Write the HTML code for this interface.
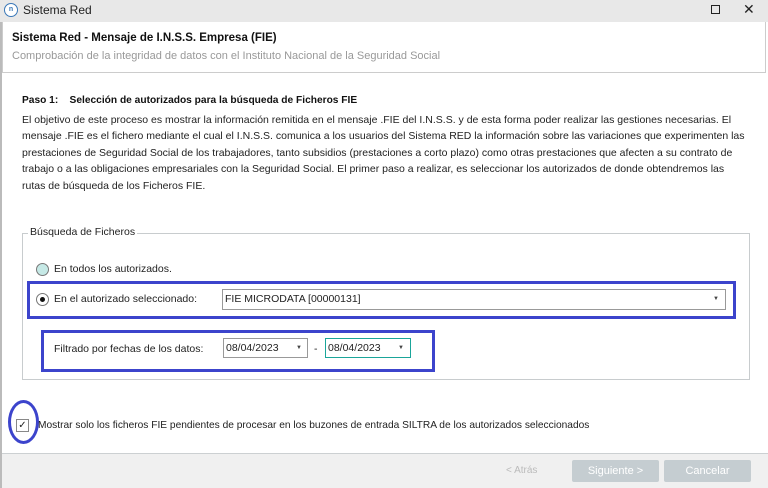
<!DOCTYPE html>
<html><head><meta charset="utf-8"><style>
*{margin:0;padding:0;box-sizing:border-box}
body{width:768px;height:488px;overflow:hidden;background:#fff;font-family:"Liberation Sans",sans-serif;font-size:11px;color:#222;position:relative}
.a{position:absolute;white-space:nowrap}
</style></head><body>
<div class="a" style="left:0;top:0;width:768px;height:22px;background:#e8e8e8"></div>
<div class="a" style="left:4px;top:3px;width:14px;height:14px;border-radius:50%;border:1.5px solid #3a78b8;background:#fff;font-size:7px;color:#3a78b8;text-align:center;line-height:11px;font-weight:bold">n</div>
<div class="a" style="left:23px;top:3px;font-size:12px;color:#222">Sistema Red</div>
<div class="a" style="left:711px;top:5px;width:9px;height:9px;border:1.3px solid #222"></div>
<div class="a" style="left:743px;top:1px;font-size:14px;color:#222">✕</div>
<div class="a" style="left:0;top:22px;width:768px;height:466px;border-left:2px solid #bbb"></div>
<div class="a" style="left:2px;top:22px;width:764px;height:51px;border:1px solid #ccc;border-top:none;background:#fff"></div>
<div class="a" style="left:12px;top:32px;font-weight:bold;font-size:11.5px;color:#111">Sistema Red - Mensaje de I.N.S.S. Empresa (FIE)</div>
<div class="a" style="left:12px;top:50px;font-size:11px;color:#999">Comprobación de la integridad de datos con el Instituto Nacional de la Seguridad Social</div>
<div class="a" style="left:22px;top:95px;font-weight:bold;font-size:10.2px;color:#111">Paso 1:&nbsp;&nbsp;&nbsp;&nbsp;Selección de autorizados para la búsqueda de Ficheros FIE</div>
<div class="a" style="left:22px;top:112px;font-size:10.5px;line-height:16.4px;color:#222;white-space:normal;width:730px">El objetivo de este proceso es mostrar la información remitida en el mensaje .FIE del I.N.S.S. y de esta forma poder realizar las gestiones necesarias. El<br>mensaje .FIE es el fichero mediante el cual el I.N.S.S. comunica a los usuarios del Sistema RED la información sobre las variaciones que experimenten las<br>prestaciones de Seguridad Social de los trabajadores, tanto subsidios (prestaciones a corto plazo) como otras prestaciones que afecten a su contrato de<br>trabajo o a las obligaciones empresariales con la Seguridad Social. El primer paso a realizar, es seleccionar los autorizados de donde obtendremos las<br>rutas de búsqueda de los Ficheros FIE.</div>
<div class="a" style="left:22px;top:233px;width:728px;height:147px;border:1px solid #c8ccce"></div>
<div class="a" style="left:28px;top:226px;background:#fff;padding:0 2px;font-size:10.5px">Búsqueda de Ficheros</div>
<div class="a" style="left:36px;top:263px;width:13px;height:13px;border-radius:50%;border:1px solid #777;background:#c6e9e6"></div>
<div class="a" style="left:54px;top:263px;font-size:10.5px">En todos los autorizados.</div>
<div class="a" style="left:27px;top:281px;width:709px;height:38px;border:3px solid #3c44cc"></div>
<div class="a" style="left:36px;top:293px;width:13px;height:13px;border-radius:50%;border:1px solid #777;background:#fff"><div style="position:absolute;left:3px;top:3px;width:5px;height:5px;border-radius:50%;background:#111"></div></div>
<div class="a" style="left:54px;top:293px;font-size:10.5px">En el autorizado seleccionado:</div>
<div class="a" style="left:222px;top:289px;width:504px;height:21px;border:1px solid #999;background:#fff;font-size:10.5px;padding:3px 0 0 2px">FIE MICRODATA [00000131]</div>
<div class="a" style="left:713px;top:296px;font-size:6px;color:#444">▼</div>
<div class="a" style="left:41px;top:330px;width:394px;height:42px;border:3px solid #3c44cc"></div>
<div class="a" style="left:54px;top:343px;font-size:10.5px">Filtrado por fechas de los datos:</div>
<div class="a" style="left:223px;top:338px;width:85px;height:20px;border:1px solid #999;font-size:10.5px;padding:3px 0 0 2px">08/04/2023</div>
<div class="a" style="left:296px;top:345px;font-size:6px;color:#444">▼</div>
<div class="a" style="left:314px;top:343px;font-size:10.5px">-</div>
<div class="a" style="left:325px;top:338px;width:86px;height:20px;border:1px solid #1aa59a;font-size:10.5px;padding:3px 0 0 2px">08/04/2023</div>
<div class="a" style="left:398px;top:345px;font-size:6px;color:#444">▼</div>
<div class="a" style="left:8px;top:400px;width:31px;height:44px;border:3px solid #3c44cc;border-radius:50%"></div>
<div class="a" style="left:16px;top:419px;width:13px;height:13px;border:1px solid #888;background:#fff;font-size:10px;line-height:11px;text-align:center">✓</div>
<div class="a" style="left:38px;top:420px;font-size:10.2px">Mostrar solo los ficheros FIE pendientes de procesar en los buzones de entrada SILTRA de los autorizados seleccionados</div>
<div class="a" style="left:2px;top:453px;width:766px;height:35px;background:#f0f0f0;border-top:1px solid #ccd0d2"></div>
<div class="a" style="left:506px;top:465px;font-size:10px;color:#bbb">&lt; Atrás</div>
<div class="a" style="left:572px;top:460px;width:87px;height:22px;background:#c5cdd1;border-radius:2px;color:#fff;font-size:11px;text-align:center;line-height:22px">Siguiente &gt;</div>
<div class="a" style="left:664px;top:460px;width:87px;height:22px;background:#c5cdd1;border-radius:2px;color:#fff;font-size:11px;text-align:center;line-height:22px">Cancelar</div>
</body></html>
